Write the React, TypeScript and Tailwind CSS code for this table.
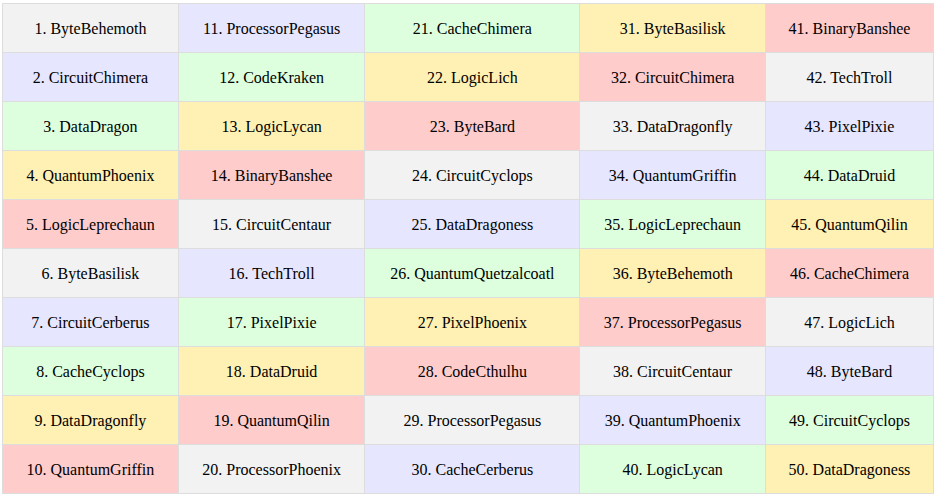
const names = [
  "ByteBehemoth", "CircuitChimera", "DataDragon", "QuantumPhoenix", "LogicLeprechaun",
  "ByteBasilisk", "CircuitCerberus", "CacheCyclops", "DataDragonfly", "QuantumGriffin",
  "ProcessorPegasus", "CodeKraken", "LogicLycan", "BinaryBanshee", "CircuitCentaur",
  "TechTroll", "PixelPixie", "DataDruid", "QuantumQilin", "ProcessorPhoenix",
  "CacheChimera", "LogicLich", "ByteBard", "CircuitCyclops", "DataDragoness",
  "QuantumQuetzalcoatl", "PixelPhoenix", "CodeCthulhu", "ProcessorPegasus", "CacheCerberus",
  "ByteBasilisk", "CircuitChimera", "DataDragonfly", "QuantumGriffin", "LogicLeprechaun",
  "ByteBehemoth", "ProcessorPegasus", "CircuitCentaur", "QuantumPhoenix", "LogicLycan",
  "BinaryBanshee", "TechTroll", "PixelPixie", "DataDruid", "QuantumQilin",
  "CacheChimera", "LogicLich", "ByteBard", "CircuitCyclops", "DataDragoness",
];

const colors = [
  "bg-[#f2f2f2]",
  "bg-[#e6e6ff]",
  "bg-[#ddffdd]",
  "bg-[#fff0b3]",
  "bg-[#ffcccc]",
];

export default function App() {
  const rows = Array.from({ length: 10 }, (_, r) => r);
  const cols = Array.from({ length: 5 }, (_, c) => c);
  return (
    <div className="w-[936px] h-[498px] bg-white px-[2px] pt-[3px] text-black">
      <table className="w-full border-collapse font-serif">
        <tbody>
          {rows.map((r) => (
            <tr key={r}>
              {cols.map((c) => {
                const n = c * 10 + r + 1;
                return (
                  <td
                    key={c}
                    className={`border border-[#dddddd] px-[15px] pt-[16px] pb-[14px] text-center text-[16px] leading-[normal] [font-family:Liberation_Serif,serif] ${colors[(r + c) % 5]}`}
                  >
                    {n}. {names[n - 1]}
                  </td>
                );
              })}
            </tr>
          ))}
        </tbody>
      </table>
    </div>
  );
}
